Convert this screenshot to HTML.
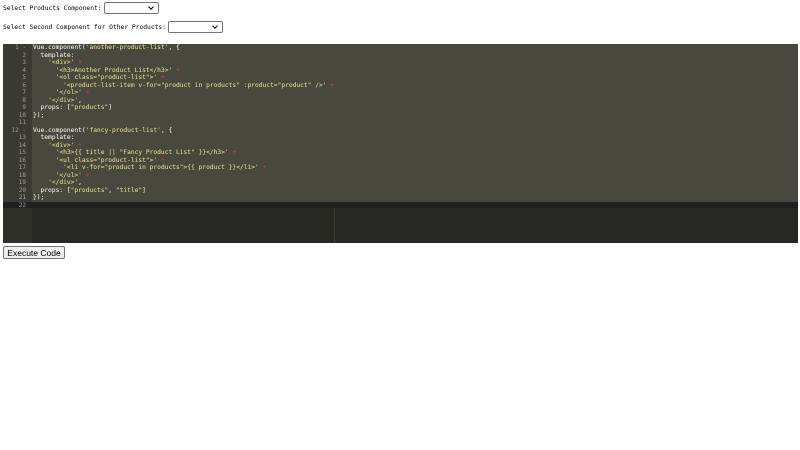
<!DOCTYPE html>
<html><head><meta charset="utf-8"><style>
body{margin:0;background:#fff;font-family:"DejaVu Sans Mono","Liberation Mono",monospace;}
.lbl{position:absolute;left:3px;font-size:6.3px;color:#000;white-space:nowrap;}
.sel{position:absolute;height:12px;border:1px solid #767676;border-radius:2px;background:#fff;box-sizing:border-box;}
.sel:after{content:"";position:absolute;right:5px;top:2px;width:3px;height:3px;border-right:1.5px solid #000;border-bottom:1.5px solid #000;transform:rotate(45deg);}
#ed{position:absolute;left:3px;top:44px;width:795px;height:199px;background:#272822;overflow:hidden;}
#gut{position:absolute;left:0;top:0;width:29px;height:199px;background:#2f3129;}
#selbg{position:absolute;left:29px;top:0;width:766px;height:158px;background:#49483e;}
#gsel{position:absolute;left:0;top:0;width:29px;height:158px;background:#3b3a32;}
#cur{position:absolute;left:0;top:158px;width:795px;height:6px;background:#202020;}
#pm{position:absolute;left:331px;top:164px;width:1px;height:35px;background:#3e3d32;}
.ln{position:absolute;left:0;width:23px;text-align:right;font-size:6px;color:#a0a098;line-height:7.5px;}
pre{position:absolute;left:30px;top:0;margin:0;font-size:6.25px;line-height:7.5px;color:#fff;font-family:inherit;}
.s{color:#f0e68a}.p{color:#f92672}
button{position:absolute;left:3px;top:246px;height:13px;width:62px;font:8.5px "Liberation Sans",sans-serif;padding:0;border:1px solid #767676;background:#efefef;border-radius:2px;}
</style></head><body>
<div class="lbl" style="top:5px">Select Products Component:</div>
<div class="sel" style="left:104px;top:2px;width:55px"></div>
<div class="lbl" style="top:24px">Select Second Component for Other Products:</div>
<div class="sel" style="left:168px;top:21px;width:55px"></div>
<div id="ed">
<div id="gut"></div><div id="selbg"></div><div id="gsel"></div><div id="cur"></div><div id="pm"></div>
<div class="ln" style="top:0">1 -<br>2<br>3<br>4<br>5<br>6<br>7<br>8<br>9<br>10<br>11<br>12 -<br>13<br>14<br>15<br>16<br>17<br>18<br>19<br>20<br>21<br>22</div>
<pre>Vue.component(<span class="s">'another-product-list'</span>, {
  template:
    <span class="s">'&lt;div&gt;'</span> <span class="p">+</span>
      <span class="s">'&lt;h3&gt;Another Product List&lt;/h3&gt;'</span> <span class="p">+</span>
      <span class="s">'&lt;ol class="product-list"&gt;'</span> <span class="p">+</span>
        <span class="s">'&lt;product-list-item v-for="product in products" :product="product" /&gt;'</span> <span class="p">+</span>
      <span class="s">'&lt;/ol&gt;'</span> <span class="p">+</span>
    <span class="s">'&lt;/div&gt;'</span>,
  props: [<span class="s">"products"</span>]
});

Vue.component(<span class="s">'fancy-product-list'</span>, {
  template:
    <span class="s">'&lt;div&gt;'</span> <span class="p">+</span>
      <span class="s">'&lt;h3&gt;{{ title || "Fancy Product List" }}&lt;/h3&gt;'</span> <span class="p">+</span>
      <span class="s">'&lt;ul class="product-list"&gt;'</span> <span class="p">+</span>
        <span class="s">'&lt;li v-for="product in products"&gt;{{ product }}&lt;/li&gt;'</span> <span class="p">+</span>
      <span class="s">'&lt;/ul&gt;'</span> <span class="p">+</span>
    <span class="s">'&lt;/div&gt;'</span>,
  props: [<span class="s">"products"</span>, <span class="s">"title"</span>]
});
</pre>
</div>
<button>Execute Code</button>
</body></html>
